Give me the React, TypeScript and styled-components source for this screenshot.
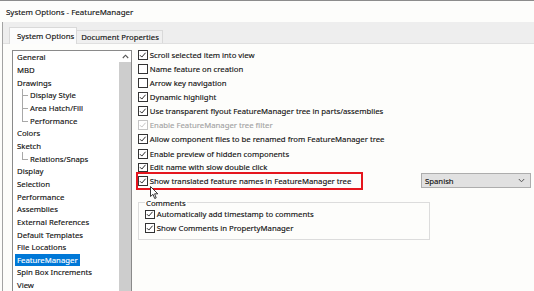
import React from "react";
import styled, { createGlobalStyle, css } from "styled-components";

const GlobalStyle = createGlobalStyle`
  html, body { margin: 0; padding: 0; background: #fdfdfb; }
  body { font-family: "Noto Sans", "Open Sans", sans-serif; color: #0f0f0f; }
  * { box-sizing: border-box; }
`;

const FONT = "7.75px";

const Window = styled.div`
  position: relative;
  width: 534px;
  height: 291px;
  overflow: hidden;
  border-top: 1px solid #8c8c8c;
  background: #fdfdfb;
  font-size: ${FONT};
  -webkit-text-stroke: 0.12px currentColor;
`;

const TitleBar = styled.div`
  height: 21px;
  flex: none;
  display: flex;
  align-items: center;
  padding-left: 6px;
  font-size: 7.95px;
  color: #111;
`;

const Frame = styled.div`
  margin-left: 2px;
  border-left: 1px solid #a3a3a3;
  display: flex;
  flex-direction: column;
  height: 269px;
  overflow: hidden;
`;

const TabStrip = styled.div`
  height: 21px;
  flex: none;
  background: #eeeeee;
  display: flex;
  align-items: flex-end;
  padding-left: 6px;
`;

const Tab = styled.div<{ $active?: boolean }>`
  display: flex;
  align-items: center;
  border: 1px solid #d9d9d9;
  border-bottom: none;
  white-space: nowrap;
  ${(p) =>
    p.$active
      ? css`
          height: 17px;
          padding: 0 2px 0 7px;
          background: #fcfcfc;
          margin-bottom: -1px;
          position: relative;
          z-index: 1;
        `
      : css`
          height: 13px;
          padding: 0 3px 0 4px;
          background: #f0f0f0;
          border-left: none;
        `}
`;

const Panel = styled.div`
  flex: none;
  height: 260px;
  border-top: 1px solid #e0e0e0;
  background: #fdfdfb;
  display: flex;
  padding-left: 9px;
`;

const ListBox = styled.div`
  margin-top: 6px;
  width: 120px;
  height: 260px;
  flex: none;
  border: 1px solid #8a8a8a;
  background: #ffffff;
  display: flex;
`;

const Items = styled.div`
  flex: 1;
  display: flex;
  flex-direction: column;
`;

const Item = styled.div`
  height: 12.67px;
  flex: none;
  display: flex;
  align-items: center;
  padding-left: 2px;
  white-space: nowrap;
`;

const ItemLabel = styled.span<{ $selected?: boolean }>`
  display: flex;
  align-items: center;
  height: 12.67px;
  padding: 0 2px;
  ${(p) =>
    p.$selected &&
    css`
      background: #0078d7;
      color: #ffffff;
    `}
`;

const Connector = styled.span<{ $last?: boolean }>`
  position: relative;
  width: 13px;
  height: 12.67px;
  flex: none;
  &::before {
    content: "";
    position: absolute;
    left: 7px;
    top: 0;
    width: 1px;
    height: ${(p) => (p.$last ? "6.5px" : "12.67px")};
    background: #a8a8a8;
  }
  &::after {
    content: "";
    position: absolute;
    left: 7px;
    top: 6.3px;
    width: 6px;
    height: 1px;
    background: #a8a8a8;
  }
`;

const ScrollBar = styled.div`
  width: 12px;
  display: flex;
  flex-direction: column;
`;

const ScrollArrow = styled.div`
  height: 11px;
  display: flex;
  align-items: center;
  justify-content: center;
  background: #ffffff;
`;

const ScrollThumb = styled.div`
  flex: 1;
  background: #cdcdcd;
`;

const RightPane = styled.div`
  flex: 1;
  padding: 4px 3px 0 6px;
  display: flex;
  flex-direction: column;
`;

const CheckGroup = styled.div<{ $rowH: number; $gapTop?: number }>`
  display: flex;
  flex-direction: column;
  margin-top: ${(p) => p.$gapTop ?? 0}px;
  --row-h: ${(p) => p.$rowH}px;
`;

const Row = styled.div`
  height: var(--row-h, 14px);
  flex: none;
  display: flex;
  align-items: center;
  justify-content: space-between;
`;

const CheckItem = styled.label<{ $disabled?: boolean; $highlight?: boolean }>`
  display: flex;
  align-items: center;
  gap: 2.3px;
  height: var(--row-h, 14px);
  white-space: nowrap;
  color: ${(p) => (p.$disabled ? "#a3a3a3" : "#0f0f0f")};
  ${(p) =>
    p.$highlight &&
    css`
      padding-right: 10px;
      outline: 2px solid #e5161e;
    `}
`;

const Box = styled.span<{ $disabled?: boolean }>`
  width: 9.5px;
  height: 9.5px;
  flex: none;
  border: 1px solid ${(p) => (p.$disabled ? "#c4c4c4" : "#333333")};
  background: #ffffff;
  display: flex;
  align-items: center;
  justify-content: center;
`;

const Select = styled.div`
  width: 110px;
  height: 15px;
  border: 1px solid #adadad;
  background: #e1e1e1;
  display: flex;
  align-items: center;
  justify-content: space-between;
  padding: 0 5px 0 3px;
  color: #0f0f0f;
`;

const Group = styled.fieldset`
  margin: 10px 0 0 -0.5px;
  width: 292px;
  padding: 0 0 4px 6.5px;
  border: 1px solid #dcdcdc;
  min-width: 0;
  --row-h: 13.5px;
`;

const Legend = styled.legend`
  padding: 0 1px;
  margin-left: 0px;
  line-height: 10px;
  color: #0f0f0f;
`;

const Cursor = styled.svg`
  position: absolute;
  left: 150px;
  top: 185px;
`;

type TreeItem = { t: string; child?: boolean; last?: boolean; selected?: boolean };

const tree: TreeItem[] = [
  { t: "General" },
  { t: "MBD" },
  { t: "Drawings" },
  { t: "Display Style", child: true },
  { t: "Area Hatch/Fill", child: true },
  { t: "Performance", child: true, last: true },
  { t: "Colors" },
  { t: "Sketch" },
  { t: "Relations/Snaps", child: true, last: true },
  { t: "Display" },
  { t: "Selection" },
  { t: "Performance" },
  { t: "Assemblies" },
  { t: "External References" },
  { t: "Default Templates" },
  { t: "File Locations" },
  { t: "FeatureManager", selected: true },
  { t: "Spin Box Increments" },
  { t: "View" },
];

const Check = ({ checked = true, disabled = false }: { checked?: boolean; disabled?: boolean }) => (
  <Box $disabled={disabled}>
    {checked && (
      <svg width="8" height="8" viewBox="0 0 8 8">
        <path
          d="M1 4.2 L3 6.2 L7 1.6"
          fill="none"
          stroke={disabled ? "#c4c4c4" : "#262626"}
          strokeWidth="1.05"
        />
      </svg>
    )}
  </Box>
);

const Option = ({
  label,
  checked = true,
  disabled,
  highlight,
}: {
  label: string;
  checked?: boolean;
  disabled?: boolean;
  highlight?: boolean;
}) => (
  <CheckItem $disabled={disabled} $highlight={highlight}>
    <Check checked={checked} disabled={disabled} />
    <span>{label}</span>
  </CheckItem>
);

export default function App() {
  return (
    <>
      <GlobalStyle />
      <Window>
        <TitleBar>System Options - FeatureManager</TitleBar>
        <Frame>
          <TabStrip>
            <Tab $active>System Options</Tab>
            <Tab>Document Properties</Tab>
          </TabStrip>
          <Panel>
            <ListBox>
              <Items>
                {tree.map((it, i) => (
                  <Item key={i}>
                    {it.child && <Connector $last={it.last} />}
                    <ItemLabel $selected={it.selected}>{it.t}</ItemLabel>
                  </Item>
                ))}
              </Items>
              <ScrollBar>
                <ScrollArrow>
                  <svg width="7" height="5" viewBox="0 0 7 5">
                    <path d="M0.8 4 L3.5 1.2 L6.2 4" fill="none" stroke="#555" strokeWidth="1.1" />
                  </svg>
                </ScrollArrow>
                <ScrollThumb />
              </ScrollBar>
            </ListBox>
            <RightPane>
              <CheckGroup $rowH={14}>
                <Row><Option label="Scroll selected item into view" /></Row>
                <Row><Option label="Name feature on creation" checked={false} /></Row>
                <Row><Option label="Arrow key navigation" checked={false} /></Row>
                <Row><Option label="Dynamic highlight" /></Row>
                <Row><Option label="Use transparent flyout FeatureManager tree in parts/assemblies" /></Row>
                <Row><Option label="Enable FeatureManager tree filter" disabled /></Row>
                <Row><Option label="Allow component files to be renamed from FeatureManager tree" /></Row>
              </CheckGroup>
              <CheckGroup $rowH={13.5} $gapTop={1}>
                <Row><Option label="Enable preview of hidden components" /></Row>
                <Row><Option label="Edit name with slow double click" /></Row>
                <Row>
                  <Option label="Show translated feature names in FeatureManager tree" highlight />
                  <Select>
                    <span>Spanish</span>
                    <svg width="7" height="5" viewBox="0 0 7 5">
                      <path d="M0.8 1 L3.5 3.8 L6.2 1" fill="none" stroke="#555" strokeWidth="1" />
                    </svg>
                  </Select>
                </Row>
              </CheckGroup>
              <Group>
                <Legend>Comments</Legend>
                <Row><Option label="Automatically add timestamp to comments" /></Row>
                <Row><Option label="Show Comments in PropertyManager" /></Row>
              </Group>
            </RightPane>
          </Panel>
        </Frame>
        <Cursor width="9" height="14" viewBox="0 0 9 14">
          <path
            d="M0.5 0.5 L0.5 10.5 L3 8.3 L4.7 12.5 L6.2 11.9 L4.6 7.8 L7.8 7.8 Z"
            fill="#ffffff"
            stroke="#222"
            strokeWidth="0.9"
            strokeLinejoin="round"
          />
        </Cursor>
      </Window>
    </>
  );
}
